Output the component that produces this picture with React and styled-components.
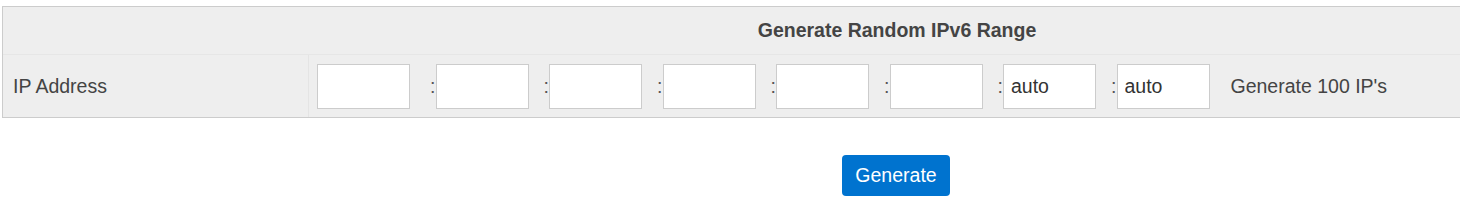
import React from 'react'
import styled, { createGlobalStyle } from 'styled-components'

const GlobalStyle = createGlobalStyle`
html, body {
  margin: 0;
  padding: 0;
  background: #fff;
  overflow: hidden;
  font-family: "Liberation Sans", Arial, sans-serif;
}
`
const Page = styled.div`
padding: 6px 0 0 2px;
width: 1788px;
`
const Table = styled.div`
width: 100%;
background-color: #eee;
border: 1px solid #ccc;
color: #444;
font-size: 19.5px;
`
const HeadRow = styled.div`
height: 47px;
display: flex;
align-items: center;
justify-content: center;
font-weight: bold;
border-bottom: 1px solid #e6e6e6;
`
const Row = styled.div`
height: 62px;
display: flex;
align-items: center;
`
const Label = styled.div`
width: 295px;
height: 100%;
padding-left: 10px;
display: flex;
align-items: center;
border-right: 1px solid #e4e4e4;
`
const Fields = styled.div`
display: flex;
align-items: center;
padding-left: 8px;
`
const Field = styled.div`
display: flex;
align-items: center;
margin-left: ${props => props.gap || '15px'};
`
const Colon = styled.span`
width: 5.5px;
color: #555;
`
const Input = styled.input`
box-sizing: border-box;
width: 93px;
height: 45px;
border: 1px solid #ccc;
background: #fff;
padding: 0 7px;
font-family: inherit;
font-size: 19.5px;
color: #333;
outline: none;
`
const Note = styled.span`
margin-left: 21px;
white-space: nowrap;
`
const Actions = styled.div`
display: flex;
justify-content: center;
margin-top: 37px;
`
const Button = styled.button`
height: 41px;
width: 108px;
padding: 0;
background-color: #0073cf;
color: #fff;
border: none;
border-radius: 4px;
font-family: inherit;
font-size: 19.5px;
cursor: pointer;
`

const parts = ['', '', '', '', '', '', 'auto', 'auto']

const App = () => {
  return <Page>
    <GlobalStyle />
    <Table>
      <HeadRow>Generate Random IPv6 Range</HeadRow>
      <Row>
        <Label>IP Address</Label>
        <Fields>
          {parts.map((p, i) => i === 0
            ? <Input key={i} defaultValue={p} />
            : <Field key={i} gap={i === 1 ? '20px' : '15px'}>
                <Colon>:</Colon>
                <Input defaultValue={p} />
              </Field>
          )}
          <Note>Generate 100 IP's</Note>
        </Fields>
      </Row>
    </Table>
    <Actions>
      <Button>Generate</Button>
    </Actions>
  </Page>
}
export default App
